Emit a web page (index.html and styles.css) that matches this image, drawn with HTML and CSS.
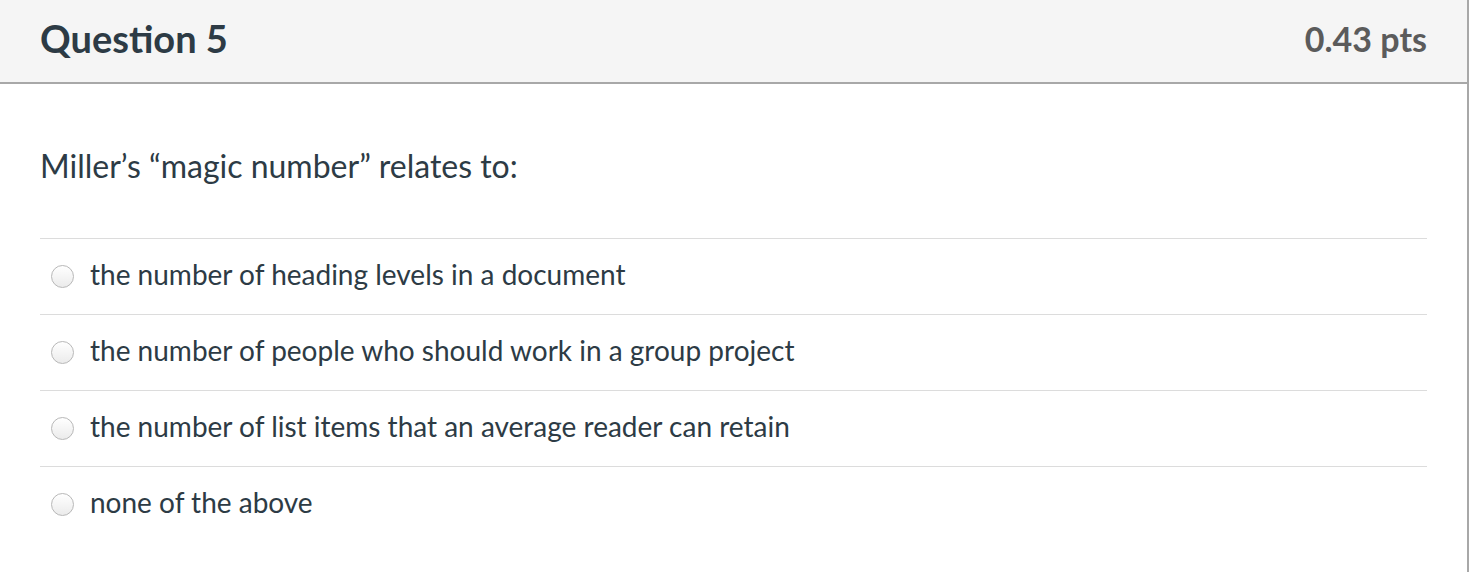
FILE: index.html
```html
<!DOCTYPE html>
<html lang="en">
<head>
<meta charset="utf-8">
<title>Question 5</title>
<link rel="stylesheet" href="styles.css">
</head>
<body>
<div class="card">
  <div class="card-header">
    <h2 class="title">Question 5</h2>
    <span class="pts">0.43 pts</span>
  </div>
  <div class="card-body">
    <p class="question">Miller’s “magic number” relates to:</p>
    <ul class="answers">
      <li class="answer"><span class="radio"></span><span class="label">the number of heading levels in a document</span></li>
      <li class="answer"><span class="radio"></span><span class="label">the number of people who should work in a group project</span></li>
      <li class="answer"><span class="radio"></span><span class="label">the number of list items that an average reader can retain</span></li>
      <li class="answer"><span class="radio"></span><span class="label">none of the above</span></li>
    </ul>
  </div>
</div>
</body>
</html>
```

FILE: styles.css
```css
html, body {
  margin: 0;
  padding: 0;
  background: #ffffff;
}
body {
  font-family: Lato, "Open Sans", "Liberation Sans", sans-serif;
  color: #2d3b45;
}
.card {
  width: 1469px;
  border-right: 2px solid #a8a8a8;
  min-height: 572px;
  box-sizing: border-box;
}
.card-header {
  background: #f5f5f5;
  border-bottom: 2px solid #a8a8a8;
  display: flex;
  align-items: center;
  justify-content: space-between;
  padding: 0 40px 6px;
  box-sizing: border-box;
  height: 84px;
}
.title {
  margin: 0;
  font-size: 38px;
  font-weight: 700;
  color: #2d3b45;
}
.pts {
  font-size: 34px;
  font-weight: 700;
  color: #5b5b5b;
}
.card-body {
  padding: 0 40px;
}
.question {
  margin: 0;
  padding-top: 62px;
  height: 92px;
  font-size: 32px;
  line-height: 40px;
}
.answers {
  list-style: none;
  margin: 0;
  padding: 0;
}
.answer {
  border-top: 1px solid #dcdcdc;
  display: flex;
  align-items: center;
  font-size: 28px;
  padding-bottom: 6px;
  box-sizing: border-box;
  height: 76px;
}
.radio {
  width: 23px;
  height: 23px;
  box-sizing: border-box;
  border-radius: 50%;
  border: 1px solid #b8b8b8;
  background: linear-gradient(#ffffff, #ebebeb);
  margin-left: 51px;
  margin-left: 11px;
  margin-right: 16px;
  margin-top: 6px;
  flex: none;
}
```
